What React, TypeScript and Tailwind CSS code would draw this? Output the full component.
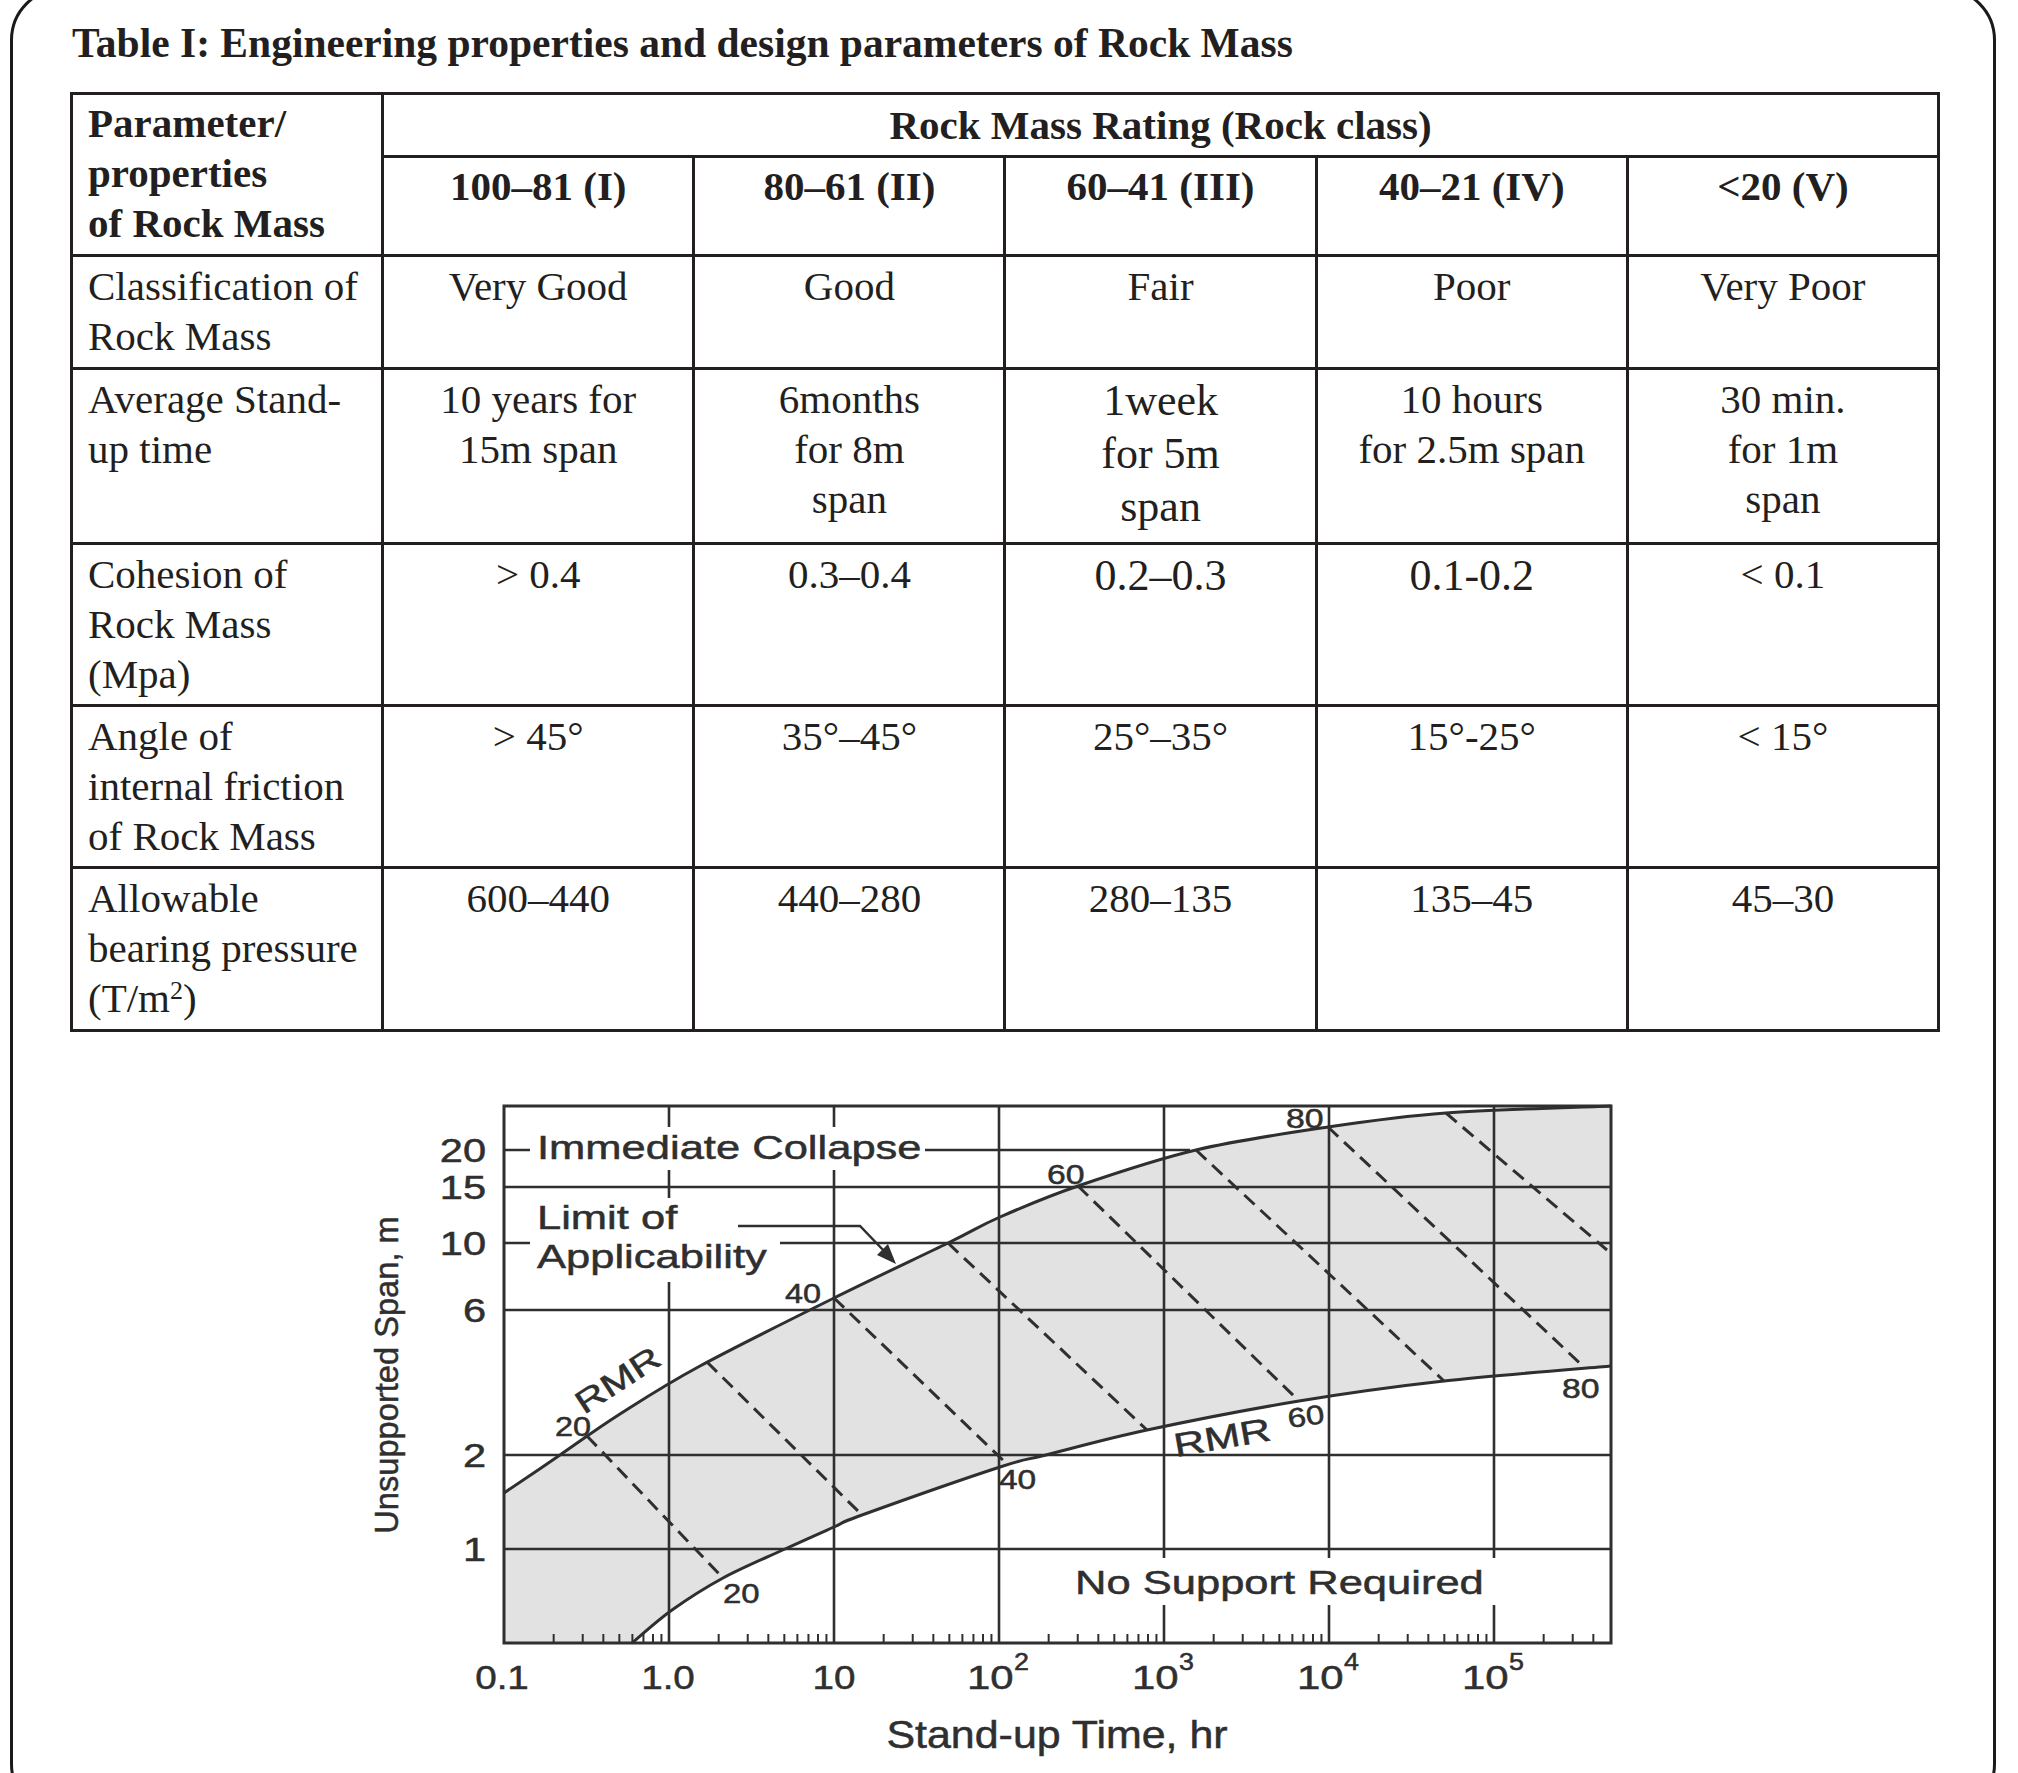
import type { ReactNode } from "react"

type Pt = [number, number]

const ink = "#2f2f2f"

const upper: Pt[] = [
  [504, 1493], [560, 1455], [620, 1414], [700, 1366], [834, 1298], [948, 1243],
  [1000, 1217], [1078, 1186], [1196, 1150], [1328, 1127], [1446, 1113], [1611, 1106],
]

const lower: Pt[] = [
  [632, 1643], [672, 1610], [723, 1578], [785, 1549], [834, 1527], [862, 1515],
  [1000, 1467], [1046, 1455], [1147, 1430], [1299, 1401], [1444, 1381], [1611, 1366],
]

const dashed: [Pt, Pt][] = [
  [[587, 1436], [723, 1578]],
  [[707, 1362], [862, 1515]],
  [[834, 1298], [1008, 1465]],
  [[948, 1243], [1147, 1430]],
  [[1078, 1186], [1299, 1401]],
  [[1196, 1150], [1444, 1381]],
  [[1328, 1127], [1585, 1368]],
  [[1446, 1113], [1607, 1250]],
]

function smooth(pts: Pt[], move = true) {
  let d = `${move ? "M" : "L"}${pts[0][0]} ${pts[0][1]}`
  for (let i = 0; i < pts.length - 1; i++) {
    const p0 = pts[i - 1] || pts[i]
    const p1 = pts[i]
    const p2 = pts[i + 1]
    const p3 = pts[i + 2] || p2
    const c1x = p1[0] + (p2[0] - p0[0]) / 6
    const c1y = p1[1] + (p2[1] - p0[1]) / 6
    const c2x = p2[0] - (p3[0] - p1[0]) / 6
    const c2y = p2[1] - (p3[1] - p1[1]) / 6
    d += ` C${c1x.toFixed(1)} ${c1y.toFixed(1)} ${c2x.toFixed(1)} ${c2y.toFixed(1)} ${p2[0]} ${p2[1]}`
  }
  return d
}

const decades = [504, 669, 834, 999, 1164, 1329, 1494]
const minorTicks: number[] = []
for (let d = 0; d < 7; d++) {
  for (let k = 2; k <= 9; k++) {
    const x = 504 + 165 * (d + Math.log10(k))
    if (x < 1608) minorTicks.push(x)
  }
}

const yLabels: [string, number][] = [
  ["20", 1150], ["15", 1187], ["10", 1243], ["6", 1310], ["2", 1455], ["1", 1549],
]

// the figure is a horizontally stretched scan, so glyphs get a scaleX
function Txt({
  x, y, size, sx = 1.28, anchor = "start", rotate, children,
}: {
  x: number; y: number; size: number; sx?: number; anchor?: "start" | "middle" | "end"; rotate?: number; children: ReactNode
}) {
  const t = `translate(${x} ${y})${rotate ? ` rotate(${rotate})` : ""} scale(${sx} 1)`
  return (
    <text x={0} y={0} fontSize={size} textAnchor={anchor} transform={t} stroke={ink} strokeWidth={0.5}>
      {children}
    </text>
  )
}

function StandUpChart() {
  const fill =
    smooth(upper) + " L1611 1366 " + smooth([...lower].reverse(), false) + " L504 1643 Z"

  return (
    <svg
      width={1300}
      height={680}
      viewBox="350 1090 1300 680"
      className="mt-[58px] ml-[280px] block"
      fontFamily="'Liberation Sans', Arial, sans-serif"
      fill={ink}
    >
      <path d={fill} fill="#e2e2e2" stroke="none" />

      <g stroke={ink} strokeWidth={2.6} fill="none">
        {[1187, 1243, 1310, 1455, 1549].map((y) => (
          <line key={y} x1={504} y1={y} x2={1611} y2={y} />
        ))}
        <line x1={504} y1={1150} x2={1190} y2={1150} />
        {decades.slice(1).map((x) => (
          <line key={x} x1={x} y1={1106} x2={x} y2={1643} />
        ))}
        {minorTicks.map((x) => (
          <line key={x} x1={x} y1={1634} x2={x} y2={1643} strokeWidth={2} />
        ))}
      </g>

      <g stroke={ink} strokeWidth={3} strokeDasharray="14 8" fill="none">
        {dashed.map(([a, b], i) => (
          <line key={i} x1={a[0]} y1={a[1]} x2={b[0]} y2={b[1]} />
        ))}
      </g>

      <g stroke={ink} strokeWidth={3} fill="none">
        <path d={smooth(upper)} />
        <path d={smooth(lower)} />
        <rect x={504} y={1106} width={1107} height={537} />
      </g>

      <g fill="#ffffff" stroke="none">
        <rect x={530} y={1127} width={395} height={43} />
        <rect x={530} y={1198} width={250} height={84} />
        <rect x={1068} y={1558} width={432} height={47} />
      </g>

      <g stroke={ink} strokeWidth={2.5} fill="none">
        <polyline points="738,1226 860,1226 886,1253" />
      </g>
      <polygon points="896,1264 877,1255 888,1244" stroke="none" />

      <Txt x={537} y={1159} size={34}>Immediate Collapse</Txt>
      <Txt x={537} y={1229} size={34}>Limit of</Txt>
      <Txt x={537} y={1268} size={34}>Applicability</Txt>
      <Txt x={1075} y={1594} size={34}>No Support Required</Txt>

      {yLabels.map(([t, y]) => (
        <Txt key={t} x={486} y={y + 12} size={33} sx={1.26} anchor="end">{t}</Txt>
      ))}

      <Txt x={502} y={1689} size={33} sx={1.17} anchor="middle">0.1</Txt>
      <Txt x={668} y={1689} size={33} sx={1.17} anchor="middle">1.0</Txt>
      <Txt x={834} y={1689} size={33} sx={1.17} anchor="middle">10</Txt>
      {[2, 3, 4, 5].map((p, i) => {
        const g = decades[i + 3]
        return (
          <g key={p}>
            <Txt x={g - 32} y={1689} size={33} sx={1.27}>10</Txt>
            <Txt x={g + 15} y={1670} size={24} sx={1.12}>{p}</Txt>
          </g>
        )
      })}

      <Txt x={1057} y={1748} size={38} sx={1.13} anchor="middle">Stand-up Time, hr</Txt>
      <Txt x={398} y={1375} size={34} sx={0.96} anchor="middle" rotate={-90}>Unsupported Span, m</Txt>

      <Txt x={555} y={1436} size={27} sx={1.2}>20</Txt>
      <Txt x={584} y={1415} size={32} sx={1.3} rotate={-33}>RMR</Txt>
      <Txt x={785} y={1303} size={27} sx={1.2}>40</Txt>
      <Txt x={1047} y={1184} size={27} sx={1.25}>60</Txt>
      <Txt x={1286} y={1128} size={27} sx={1.25}>80</Txt>
      <Txt x={723} y={1603} size={27} sx={1.22}>20</Txt>
      <Txt x={999} y={1489} size={27} sx={1.24}>40</Txt>
      <Txt x={1176} y={1457} size={33} sx={1.3} rotate={-10}>RMR</Txt>
      <Txt x={1289} y={1428} size={27} sx={1.22} rotate={-8}>60</Txt>
      <Txt x={1562} y={1398} size={27} sx={1.25}>80</Txt>
    </svg>
  )
}

const classes = ["100–81 (I)", "80–61 (II)", "60–41 (III)", "40–21 (IV)", "<20 (V)"]

type Cell = { lines: string[]; big?: boolean }

const rows: { label: ReactNode[]; cells: Cell[] }[] = [
  {
    label: ["Classification of", "Rock Mass"],
    cells: [
      { lines: ["Very Good"] },
      { lines: ["Good"] },
      { lines: ["Fair"] },
      { lines: ["Poor"] },
      { lines: ["Very Poor"] },
    ],
  },
  {
    label: ["Average Stand-", "up time"],
    cells: [
      { lines: ["10 years for", "15m span"] },
      { lines: ["6months", "for 8m", "span"] },
      { lines: ["1week", "for 5m", "span"], big: true },
      { lines: ["10 hours", "for 2.5m span"] },
      { lines: ["30 min.", "for 1m", "span"] },
    ],
  },
  {
    label: ["Cohesion of", "Rock Mass", "(Mpa)"],
    cells: [
      { lines: ["> 0.4"] },
      { lines: ["0.3–0.4"] },
      { lines: ["0.2–0.3"], big: true },
      { lines: ["0.1-0.2"], big: true },
      { lines: ["< 0.1"] },
    ],
  },
  {
    label: ["Angle of", "internal friction", "of Rock Mass"],
    cells: [
      { lines: ["> 45°"] },
      { lines: ["35°–45°"] },
      { lines: ["25°–35°"] },
      { lines: ["15°-25°"] },
      { lines: ["< 15°"] },
    ],
  },
  {
    label: [
      "Allowable",
      "bearing pressure",
      <>
        (T/m<sup className="text-[26px]">2</sup>)
      </>,
    ],
    cells: [
      { lines: ["600–440"] },
      { lines: ["440–280"] },
      { lines: ["280–135"] },
      { lines: ["135–45"] },
      { lines: ["45–30"] },
    ],
  },
]

function RockTable() {
  return (
    <div className="mt-[28px] grid w-[1870px] grid-cols-6 grid-rows-[60px_96px_110px_172px_159px_159px_160px] gap-[3px] bg-[#231f20] p-[3px]">
      <div className="row-span-2 bg-white pl-[15px] pt-[3px] text-[41px] font-bold leading-[50px]">
        Parameter/
        <br />
        properties
        <br />
        of Rock Mass
      </div>
      <div className="col-span-5 flex items-center justify-center bg-white text-[41px] font-bold leading-[50px]">
        Rock Mass Rating (Rock class)
      </div>
      {classes.map((c) => (
        <div key={c} className="bg-white pt-[3px] text-center text-[41px] font-bold leading-[50px]">
          {c}
        </div>
      ))}
      {rows.map((row, r) => (
        <div key={r} className="contents">
          <div className="bg-white pl-[15px] pt-[4px] text-[41px] leading-[50px]">
            {row.label.map((l, i) => (
              <div key={i}>{l}</div>
            ))}
          </div>
          {row.cells.map((cell, i) => (
            <div
              key={i}
              className={
                cell.big
                  ? "bg-white pt-[4px] text-center text-[44px] leading-[53px]"
                  : "bg-white pt-[4px] text-center text-[41px] leading-[50px]"
              }
            >
              {cell.lines.map((l) => (
                <div key={l}>{l}</div>
              ))}
            </div>
          ))}
        </div>
      ))}
    </div>
  )
}

export default function App() {
  return (
    <div className="h-[1773px] w-[2018px] overflow-hidden bg-white">
      <div className="-mt-[13px] ml-[10px] h-[1830px] w-[1986px] rounded-[53px] border-[3px] border-[#1a1a1a] pl-[57px] pt-[33px] font-['Liberation_Serif','Times_New_Roman',serif] text-[#231f20]">
        <h1 className="ml-[2px] text-[41.5px] font-bold leading-[41px]">
          Table I: Engineering properties and design parameters of Rock Mass
        </h1>
        <RockTable />
        <StandUpChart />
      </div>
    </div>
  )
}
